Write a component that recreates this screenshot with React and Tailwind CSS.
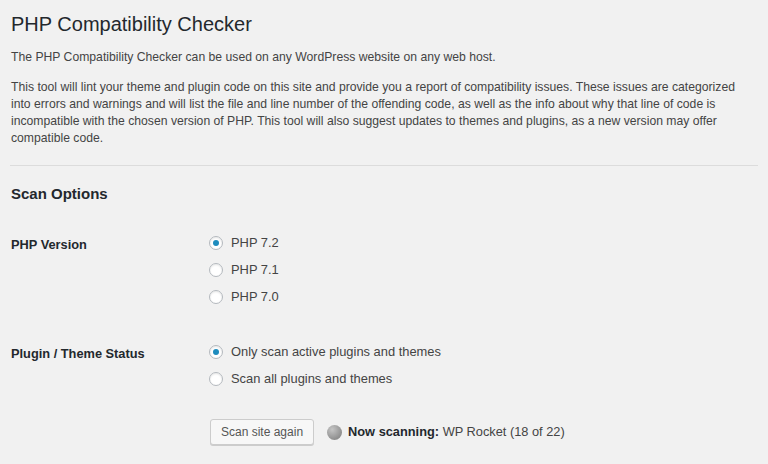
export default function App() {
  const font = { fontFamily: '"Liberation Sans", Arial, sans-serif' };
  const Radio = ({ checked, label }) => (
    <div className="flex h-[27px] items-center">
      <span className="flex h-[14px] w-[14px] items-center justify-center rounded-full border border-[#b4b9be] bg-white shadow-[inset_0_1px_2px_rgba(0,0,0,0.1)]">
        {checked && <span className="h-[6px] w-[6px] rounded-full bg-[#1e8cbe]" />}
      </span>
      <span className="ml-[8px] text-[12.9px] text-[#444]">{label}</span>
    </div>
  );
  return (
    <div className="min-h-[464px] w-[768px] bg-[#f1f1f1] pl-[11px] pr-[10px]" style={font}>
      <h1 className="pt-[10px] text-[20px] leading-[28px] text-[#23282d]">PHP Compatibility Checker</h1>
      <p className="mt-[11px] text-[12.2px] leading-[17px] text-[#444]">
        The PHP Compatibility Checker can be used on any WordPress website on any web host.
      </p>
      <p className="mt-[13px] max-w-[742px] text-[12.2px] leading-[17px] text-[#444]">
        This tool will lint your theme and plugin code on this site and provide you a report of compatibility issues. These issues are categorized into errors and warnings and will list the file and line number of the offending code, as well as the info about why that line of code is incompatible with the chosen version of PHP. This tool will also suggest updates to themes and plugins, as a new version may offer compatible code.
      </p>
      <div className="-ml-[1px] mt-[18px] border-t border-[#dcdcdc]" />
      <h2 className="mt-[18px] text-[15px] font-bold leading-[20px] text-[#23282d]">Scan Options</h2>
      <div className="mt-[25px] flex">
        <div className="w-[198px] pt-[7px] text-[12.8px] font-bold leading-[17px] text-[#23282d]">PHP Version</div>
        <div className="flex flex-col">
          <Radio checked label="PHP 7.2" />
          <Radio label="PHP 7.1" />
          <Radio label="PHP 7.0" />
        </div>
      </div>
      <div className="mt-[28px] flex">
        <div className="w-[198px] pt-[7px] text-[12.8px] font-bold leading-[17px] text-[#23282d]">Plugin / Theme Status</div>
        <div className="flex flex-col">
          <Radio checked label="Only scan active plugins and themes" />
          <Radio label="Scan all plugins and themes" />
        </div>
      </div>
      <div className="mt-[27px] flex items-center pl-[199px]">
        <button className="h-[26px] rounded-[3px] border border-[#cccccc] bg-[#f7f7f7] px-[10px] text-[12px] text-[#555] shadow-[0_1px_0_#cccccc]">
          Scan site again
        </button>
        <span className="ml-[13px] h-[15px] w-[15px] rounded-full bg-[radial-gradient(circle_at_35%_30%,#c4c4c4,#8f8f8f_70%)]" />
        <span className="ml-[6px] text-[12.8px] text-[#444]">
          <b className="text-[#23282d]">Now scanning:</b> WP Rocket (18 of 22)
        </span>
      </div>
    </div>
  );
}
